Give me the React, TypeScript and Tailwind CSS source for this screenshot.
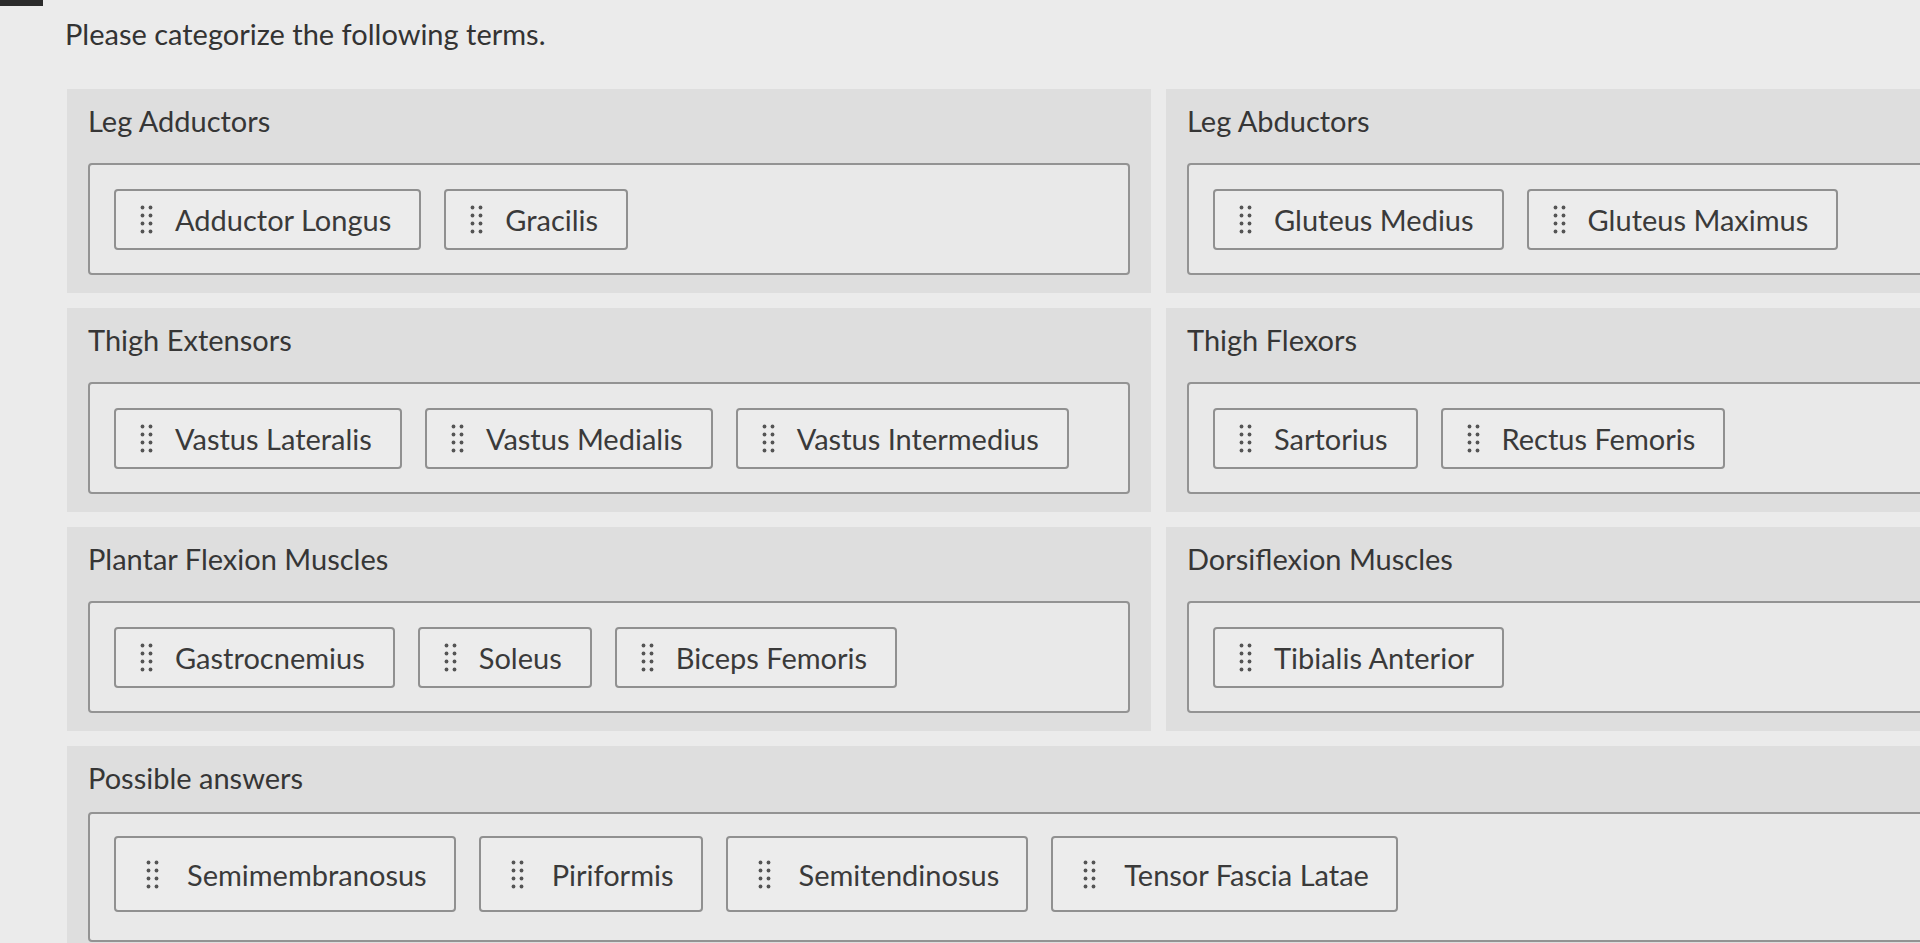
import React from 'react';

interface Category {
  title: string;
  items: string[];
}

const categories: Category[] = [
  { title: 'Leg Adductors', items: ['Adductor Longus', 'Gracilis'] },
  { title: 'Leg Abductors', items: ['Gluteus Medius', 'Gluteus Maximus'] },
  { title: 'Thigh Extensors', items: ['Vastus Lateralis', 'Vastus Medialis', 'Vastus Intermedius'] },
  { title: 'Thigh Flexors', items: ['Sartorius', 'Rectus Femoris'] },
  { title: 'Plantar Flexion Muscles', items: ['Gastrocnemius', 'Soleus', 'Biceps Femoris'] },
  { title: 'Dorsiflexion Muscles', items: ['Tibialis Anterior'] },
];

const possibleAnswers = ['Semimembranosus', 'Piriformis', 'Semitendinosus', 'Tensor Fascia Latae'];

function DragHandle() {
  return (
    <svg width="13" height="29" viewBox="0 0 13 29" className="shrink-0">
      {[2.5, 10.5, 18.5, 26.5].map((cy) => (
        <g key={cy} fill="#545454">
          <circle cx="2.5" cy={cy} r="1.9" />
          <circle cx="10.5" cy={cy} r="1.9" />
        </g>
      ))}
    </svg>
  );
}

function Chip({ label, large = false }: { label: string; large?: boolean }) {
  return (
    <div
      className={
        large
          ? 'flex h-[76px] items-center gap-[28px] rounded-[4px] border-2 border-[#909090] bg-[#ececec] pl-[30px] pr-[27px]'
          : 'flex h-[61px] items-center gap-[22px] rounded-[4px] border-2 border-[#909090] bg-[#ececec] pl-[24px] pr-[28px]'
      }
    >
      <DragHandle />
      <span className="text-[29px] leading-none text-[#3a3a3a]">{label}</span>
    </div>
  );
}

function CategoryPanel({ title, items }: Category) {
  return (
    <section className="h-[204px] bg-[#dedede] px-[21px] pt-[16px]">
      <h2 className="text-[29px] leading-[32px] text-[#363636]">{title}</h2>
      <div className="mt-[26px] flex h-[112px] items-center gap-[23px] rounded-[4px] border-2 border-[#939393] bg-[#e9e9e9] px-[24px]">
        {items.map((item) => (
          <Chip key={item} label={item} />
        ))}
      </div>
    </section>
  );
}

export default function App() {
  return (
    <div className="h-[943px] w-[1920px] overflow-hidden bg-[#ebebeb] font-['Lato','Liberation_Sans',sans-serif]">
      <div className="h-[6px] w-[43px] bg-[#2b2b2b]" />
      <div className="w-[2250px] pl-[65px]">
        <h1 className="pt-[10px] text-[29px] leading-[36px] text-[#333333]">
          Please categorize the following terms.
        </h1>

        <div className="mt-[37px] grid grid-cols-2 gap-[15px] pl-[2px]">
          {categories.map((category) => (
            <CategoryPanel key={category.title} title={category.title} items={category.items} />
          ))}
          <section className="col-span-2 h-[220px] bg-[#dedede] px-[21px] pt-[16px]">
            <h2 className="text-[29px] leading-[32px] text-[#363636]">Possible answers</h2>
            <div className="mt-[18px] flex h-[130px] items-start gap-[23px] rounded-[4px] border-2 border-[#939393] bg-[#e9e9e9] px-[24px] pt-[22px]">
              {possibleAnswers.map((item) => (
                <Chip key={item} label={item} large />
              ))}
            </div>
          </section>
        </div>
      </div>
    </div>
  );
}
